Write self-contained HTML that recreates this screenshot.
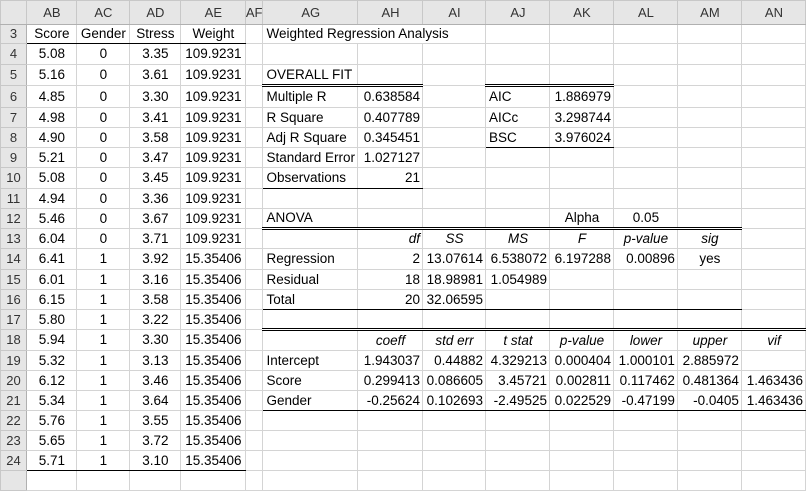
<!DOCTYPE html>
<html><head><meta charset="utf-8"><style>
body{margin:0;background:#fff;width:806px;height:473px;overflow:hidden}
table{border-collapse:collapse;table-layout:fixed;font-family:"Liberation Sans",sans-serif;font-size:13.5px;color:#000}
td{border:1px solid #d4d4d4;padding:0 2px 0 3px;white-space:nowrap;overflow:visible;line-height:14px}
tr.h td{background:#e6e6e6;color:#333;text-align:center;border-color:#c8c8c8;border-bottom-color:#b0b0b0;font-size:13px}
td.r{background:#e6e6e6;color:#333;text-align:center;padding:0;border-color:#c8c8c8;border-right-color:#b0b0b0;font-size:13px}
.c{text-align:center}.n{text-align:right}.i{font-style:italic;text-align:center}
.b{border-bottom:1px solid #000}.d{border-bottom:3px double #000}
</style></head><body>
<table>
<colgroup><col style="width:26px"><col style="width:50px"><col style="width:53px"><col style="width:51px"><col style="width:65px"><col style="width:17px"><col style="width:92px"><col style="width:65px"><col style="width:63px"><col style="width:64px"><col style="width:64px"><col style="width:64px"><col style="width:64px"><col style="width:64px"></colgroup>
<tr class="h" style="height:24px"><td></td><td>AB</td><td>AC</td><td>AD</td><td>AE</td><td style="padding:0">AF</td><td>AG</td><td>AH</td><td>AI</td><td>AJ</td><td>AK</td><td>AL</td><td>AM</td><td>AN</td></tr>
<tr style="height:19px"><td class="r">3</td><td class="c b">Score</td><td class="c b">Gender</td><td class="c b">Stress</td><td class="c b">Weight</td><td></td><td colspan="3" style="border-right-color:#d4d4d4">Weighted Regression Analysis</td><td></td><td></td><td></td><td></td><td></td></tr>
<tr style="height:21px"><td class="r">4</td><td class="c">5.08</td><td class="c">0</td><td class="c">3.35</td><td class="c">109.9231</td><td></td><td></td><td></td><td></td><td></td><td></td><td></td><td></td><td></td></tr>
<tr style="height:21px"><td class="r">5</td><td class="c">5.16</td><td class="c">0</td><td class="c">3.61</td><td class="c">109.9231</td><td></td><td class="d">OVERALL FIT</td><td class="d"></td><td></td><td class="d"></td><td class="d"></td><td></td><td></td><td></td></tr>
<tr style="height:22px"><td class="r">6</td><td class="c">4.85</td><td class="c">0</td><td class="c">3.30</td><td class="c">109.9231</td><td></td><td>Multiple R</td><td class="n">0.638584</td><td></td><td>AIC</td><td class="n">1.886979</td><td></td><td></td><td></td></tr>
<tr style="height:20px"><td class="r">7</td><td class="c">4.98</td><td class="c">0</td><td class="c">3.41</td><td class="c">109.9231</td><td></td><td>R Square</td><td class="n">0.407789</td><td></td><td>AICc</td><td class="n">3.298744</td><td></td><td></td><td></td></tr>
<tr style="height:20px"><td class="r">8</td><td class="c">4.90</td><td class="c">0</td><td class="c">3.58</td><td class="c">109.9231</td><td></td><td>Adj R Square</td><td class="n">0.345451</td><td></td><td class="b">BSC</td><td class="n b">3.976024</td><td></td><td></td><td></td></tr>
<tr style="height:20px"><td class="r">9</td><td class="c">5.21</td><td class="c">0</td><td class="c">3.47</td><td class="c">109.9231</td><td></td><td>Standard Error</td><td class="n">1.027127</td><td></td><td></td><td></td><td></td><td></td><td></td></tr>
<tr style="height:21px"><td class="r">10</td><td class="c">5.08</td><td class="c">0</td><td class="c">3.45</td><td class="c">109.9231</td><td></td><td class="b">Observations</td><td class="n b">21</td><td></td><td></td><td></td><td></td><td></td><td></td></tr>
<tr style="height:20px"><td class="r">11</td><td class="c">4.94</td><td class="c">0</td><td class="c">3.36</td><td class="c">109.9231</td><td></td><td></td><td></td><td></td><td></td><td></td><td></td><td></td><td></td></tr>
<tr style="height:20px"><td class="r">12</td><td class="c">5.46</td><td class="c">0</td><td class="c">3.67</td><td class="c">109.9231</td><td></td><td class="d">ANOVA</td><td class="d"></td><td class="d"></td><td class="d"></td><td class="c d">Alpha</td><td class="c d">0.05</td><td class="d"></td><td></td></tr>
<tr style="height:20px"><td class="r">13</td><td class="c">6.04</td><td class="c">0</td><td class="c">3.71</td><td class="c">109.9231</td><td></td><td></td><td class="n" style="font-style:italic">df</td><td class="i">SS</td><td class="i">MS</td><td class="i">F</td><td class="i">p-value</td><td class="i">sig</td><td></td></tr>
<tr style="height:21px"><td class="r">14</td><td class="c">6.41</td><td class="c">1</td><td class="c">3.92</td><td class="c">15.35406</td><td></td><td>Regression</td><td class="n">2</td><td class="n">13.07614</td><td class="n">6.538072</td><td class="n">6.197288</td><td class="n">0.00896</td><td class="c">yes</td><td></td></tr>
<tr style="height:20px"><td class="r">15</td><td class="c">6.01</td><td class="c">1</td><td class="c">3.16</td><td class="c">15.35406</td><td></td><td>Residual</td><td class="n">18</td><td class="n">18.98981</td><td class="n">1.054989</td><td></td><td></td><td></td><td></td></tr>
<tr style="height:20px"><td class="r">16</td><td class="c">6.15</td><td class="c">1</td><td class="c">3.58</td><td class="c">15.35406</td><td></td><td class="b">Total</td><td class="n b">20</td><td class="n b">32.06595</td><td class="b"></td><td class="b"></td><td class="b"></td><td class="b"></td><td></td></tr>
<tr style="height:20px"><td class="r">17</td><td class="c">5.80</td><td class="c">1</td><td class="c">3.22</td><td class="c">15.35406</td><td></td><td class="d"></td><td class="d"></td><td class="d"></td><td class="d"></td><td class="d"></td><td class="d"></td><td class="d"></td><td class="d"></td></tr>
<tr style="height:21px"><td class="r">18</td><td class="c">5.94</td><td class="c">1</td><td class="c">3.30</td><td class="c">15.35406</td><td></td><td></td><td class="i">coeff</td><td class="i">std err</td><td class="i">t stat</td><td class="i">p-value</td><td class="i">lower</td><td class="i">upper</td><td class="i">vif</td></tr>
<tr style="height:20px"><td class="r">19</td><td class="c">5.32</td><td class="c">1</td><td class="c">3.13</td><td class="c">15.35406</td><td></td><td>Intercept</td><td class="n">1.943037</td><td class="n">0.44882</td><td class="n">4.329213</td><td class="n">0.000404</td><td class="n">1.000101</td><td class="n">2.885972</td><td></td></tr>
<tr style="height:20px"><td class="r">20</td><td class="c">6.12</td><td class="c">1</td><td class="c">3.46</td><td class="c">15.35406</td><td></td><td>Score</td><td class="n">0.299413</td><td class="n">0.086605</td><td class="n">3.45721</td><td class="n">0.002811</td><td class="n">0.117462</td><td class="n">0.481364</td><td class="n">1.463436</td></tr>
<tr style="height:20px"><td class="r">21</td><td class="c">5.34</td><td class="c">1</td><td class="c">3.64</td><td class="c">15.35406</td><td></td><td class="b">Gender</td><td class="n b">-0.25624</td><td class="n b">0.102693</td><td class="n b">-2.49525</td><td class="n b">0.022529</td><td class="n b">-0.47199</td><td class="n b">-0.0405</td><td class="n b">1.463436</td></tr>
<tr style="height:20px"><td class="r">22</td><td class="c">5.76</td><td class="c">1</td><td class="c">3.55</td><td class="c">15.35406</td><td></td><td></td><td></td><td></td><td></td><td></td><td></td><td></td><td></td></tr>
<tr style="height:20px"><td class="r">23</td><td class="c">5.65</td><td class="c">1</td><td class="c">3.72</td><td class="c">15.35406</td><td></td><td></td><td></td><td></td><td></td><td></td><td></td><td></td><td></td></tr>
<tr style="height:20px"><td class="r">24</td><td class="c b">5.71</td><td class="c b">1</td><td class="c b">3.10</td><td class="c b">15.35406</td><td></td><td></td><td></td><td></td><td></td><td></td><td></td><td></td><td></td></tr>
<tr style="height:20px"><td class="r"></td><td></td><td></td><td></td><td></td><td></td><td></td><td></td><td></td><td></td><td></td><td></td><td></td><td></td></tr>
</table>
</body></html>
